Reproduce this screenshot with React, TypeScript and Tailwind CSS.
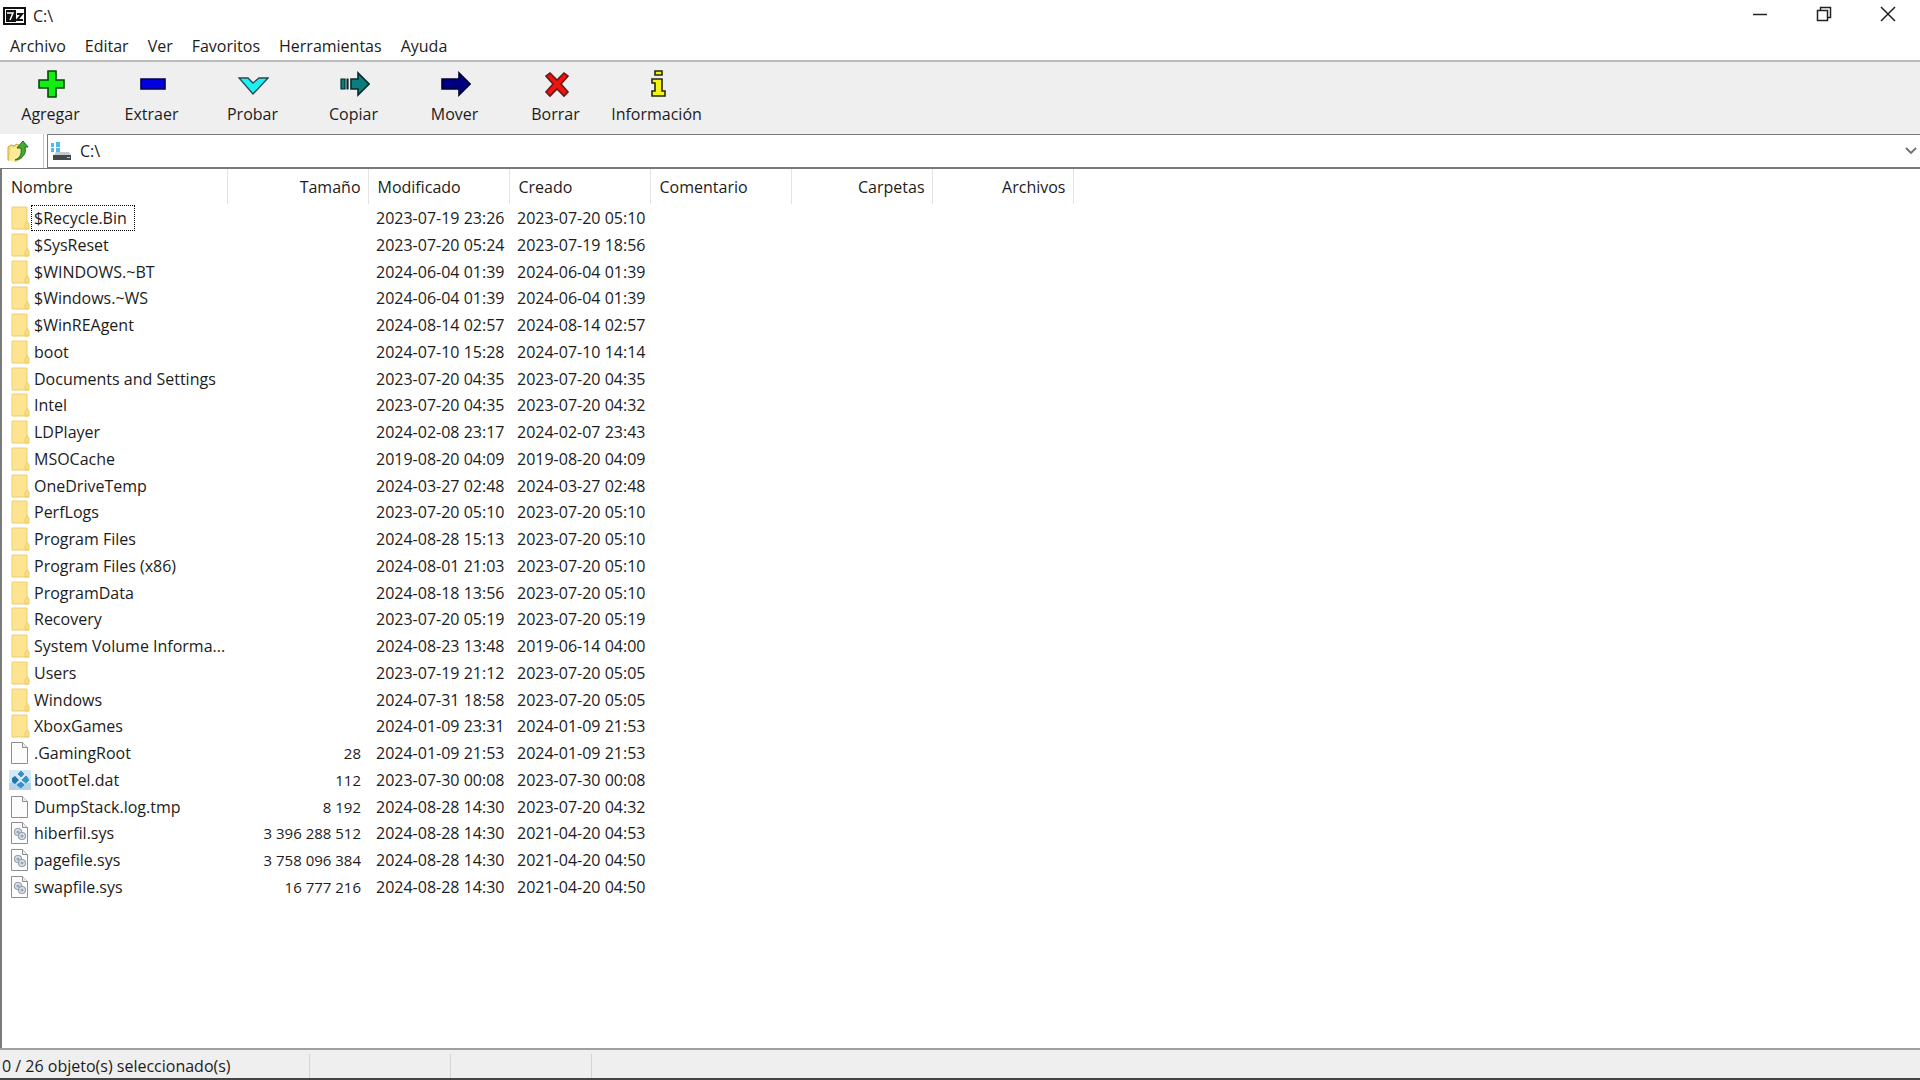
import type { ReactNode } from 'react';

type FileKind = 'folder' | 'blank' | 'kodi' | 'system';

type Entry = {
  name: string;
  size?: string;
  modified: string;
  created: string;
  kind: FileKind;
};

const menus = ['Archivo', 'Editar', 'Ver', 'Favoritos', 'Herramientas', 'Ayuda'];

const columns = [
  { label: 'Nombre' },
  { label: 'Tamaño', right: true },
  { label: 'Modificado' },
  { label: 'Creado' },
  { label: 'Comentario' },
  { label: 'Carpetas', right: true },
  { label: 'Archivos', right: true }
];

const entries: Entry[] = [
  { name: '$Recycle.Bin', modified: '2023-07-19 23:26', created: '2023-07-20 05:10', kind: 'folder' },
  { name: '$SysReset', modified: '2023-07-20 05:24', created: '2023-07-19 18:56', kind: 'folder' },
  { name: '$WINDOWS.~BT', modified: '2024-06-04 01:39', created: '2024-06-04 01:39', kind: 'folder' },
  { name: '$Windows.~WS', modified: '2024-06-04 01:39', created: '2024-06-04 01:39', kind: 'folder' },
  { name: '$WinREAgent', modified: '2024-08-14 02:57', created: '2024-08-14 02:57', kind: 'folder' },
  { name: 'boot', modified: '2024-07-10 15:28', created: '2024-07-10 14:14', kind: 'folder' },
  { name: 'Documents and Settings', modified: '2023-07-20 04:35', created: '2023-07-20 04:35', kind: 'folder' },
  { name: 'Intel', modified: '2023-07-20 04:35', created: '2023-07-20 04:32', kind: 'folder' },
  { name: 'LDPlayer', modified: '2024-02-08 23:17', created: '2024-02-07 23:43', kind: 'folder' },
  { name: 'MSOCache', modified: '2019-08-20 04:09', created: '2019-08-20 04:09', kind: 'folder' },
  { name: 'OneDriveTemp', modified: '2024-03-27 02:48', created: '2024-03-27 02:48', kind: 'folder' },
  { name: 'PerfLogs', modified: '2023-07-20 05:10', created: '2023-07-20 05:10', kind: 'folder' },
  { name: 'Program Files', modified: '2024-08-28 15:13', created: '2023-07-20 05:10', kind: 'folder' },
  { name: 'Program Files (x86)', modified: '2024-08-01 21:03', created: '2023-07-20 05:10', kind: 'folder' },
  { name: 'ProgramData', modified: '2024-08-18 13:56', created: '2023-07-20 05:10', kind: 'folder' },
  { name: 'Recovery', modified: '2023-07-20 05:19', created: '2023-07-20 05:19', kind: 'folder' },
  { name: 'System Volume Informa...', modified: '2024-08-23 13:48', created: '2019-06-14 04:00', kind: 'folder' },
  { name: 'Users', modified: '2023-07-19 21:12', created: '2023-07-20 05:05', kind: 'folder' },
  { name: 'Windows', modified: '2024-07-31 18:58', created: '2023-07-20 05:05', kind: 'folder' },
  { name: 'XboxGames', modified: '2024-01-09 23:31', created: '2024-01-09 21:53', kind: 'folder' },
  { name: '.GamingRoot', size: '28', modified: '2024-01-09 21:53', created: '2024-01-09 21:53', kind: 'blank' },
  { name: 'bootTel.dat', size: '112', modified: '2023-07-30 00:08', created: '2023-07-30 00:08', kind: 'kodi' },
  { name: 'DumpStack.log.tmp', size: '8 192', modified: '2024-08-28 14:30', created: '2023-07-20 04:32', kind: 'blank' },
  { name: 'hiberfil.sys', size: '3 396 288 512', modified: '2024-08-28 14:30', created: '2021-04-20 04:53', kind: 'system' },
  { name: 'pagefile.sys', size: '3 758 096 384', modified: '2024-08-28 14:30', created: '2021-04-20 04:50', kind: 'system' },
  { name: 'swapfile.sys', size: '16 777 216', modified: '2024-08-28 14:30', created: '2021-04-20 04:50', kind: 'system' }
];

function ToolIcon({ children }: { children: ReactNode }) {
  return (
    <svg viewBox="0 0 32 32" className="w-8 h-8" strokeWidth="1.6" aria-hidden="true">
      {children}
    </svg>
  );
}

const tools = [
  {
    label: 'Agregar',
    icon: (
      <ToolIcon>
        <path d="M13 3h8v9h8v8h-8v9h-8v-9H4v-8h9z" fill="#12ee12" stroke="#064a06" />
      </ToolIcon>
    )
  },
  {
    label: 'Extraer',
    icon: (
      <ToolIcon>
        <path d="M5 11h24v10H5z" fill="#0000e0" stroke="#00004e" />
      </ToolIcon>
    )
  },
  {
    label: 'Probar',
    icon: (
      <ToolIcon>
        <path d="M2 10h9l5 5 6-5h9L16 26z" fill="#1cf0f5" stroke="#27484c" strokeWidth="1.3" />
      </ToolIcon>
    )
  },
  {
    label: 'Copiar',
    icon: (
      <ToolIcon>
        <path d="M3 11h4v10H3zM9 11h1v10H9z" fill="#0b7d7d" stroke="#062b2b" strokeWidth="1.2" />
        <path d="M13 11h7V5l11 11-11 11v-6h-7z" fill="#0b7d7d" stroke="#062b2b" />
      </ToolIcon>
    )
  },
  {
    label: 'Mover',
    icon: (
      <ToolIcon>
        <path d="M3 11h17V5l11 11-11 11v-6H3z" fill="#00007e" stroke="#000036" />
      </ToolIcon>
    )
  },
  {
    label: 'Borrar',
    icon: (
      <ToolIcon>
        <path
          d="M10 5l7 7 7-7 4 3-7 8 7 8-4 4-7-7-7 7-4-4 7-8-7-8z"
          fill="#ee1410"
          stroke="#6d1512"
        />
      </ToolIcon>
    )
  },
  {
    label: 'Información',
    icon: (
      <ToolIcon>
        <path d="M14 3h7v4h-7zM11 11h10v12h3v5H11v-5h3v-8h-3z" fill="#f5f514" stroke="#29290a" />
      </ToolIcon>
    )
  }
];

function FileIcon({ kind }: { kind: FileKind }) {
  if (kind === 'folder') {
    return (
      <svg viewBox="0 0 22 24" className="w-[22px] h-6 shrink-0" aria-hidden="true">
        <path d="M3 1h15v22H3z" fill="#fce491" />
        <path d="M3 1v22M3 1h15" stroke="#f0cf74" fill="none" />
        <path d="M18 1v15l-2 3v4h4v-5l-2-3" fill="#fadd80" stroke="#edcd6c" />
        <path d="M3 23h17" stroke="#eccb6c" />
      </svg>
    );
  }
  if (kind === 'kodi') {
    return (
      <svg viewBox="0 0 22 24" className="w-[22px] h-6 shrink-0" aria-hidden="true">
        <path d="M0 2h22v20H0z" fill="#d3e8f4" />
        <path d="M0 15h22v7H0z" fill="#b5d3e6" />
        <g fill="#3592c9" stroke="#3592c9" strokeWidth="1" strokeLinejoin="round">
          <path d="M12 3l3 3-3 3-3-3z" />
          <path d="M17 8l3 4-3 3-4-3z" />
          <path d="M12 14l3 3-3 3-4-3z" />
        </g>
        <path d="M3 10l3-2 4 4-4 4-3-2z" fill="#1f75ad" />
      </svg>
    );
  }
  return (
    <svg viewBox="0 0 22 24" className="w-[22px] h-6 shrink-0" aria-hidden="true">
      <path d="M2.500 1.500h11l5 5v16h-16z" fill="#fcfcfc" stroke="#8e8e8e" />
      <path d="M13.500 1.500v5h5" fill="#eeeeee" stroke="#8e8e8e" />
      {kind === 'system' && (
        <g fill="#e1e7ec" stroke="#8f9eab" strokeWidth="1.200">
          <circle cx="9" cy="11" r="3.500" />
          <circle cx="13" cy="15" r="3.500" />
          <circle cx="9" cy="11" r="1" />
          <circle cx="13" cy="15" r="1" />
        </g>
      )}
    </svg>
  );
}

function TitleBar() {
  return (
    <header className="flex items-center justify-between h-8 pl-[3px]">
      <div className="flex items-center gap-[7px]">
        <svg viewBox="0 0 23 18" className="w-[23px] h-[18px]" aria-hidden="true">
          <path d="M1 1h21v16H1z" fill="#fff" stroke="#111" strokeWidth="2" />
          <path d="M3 3h10v12H3z" fill="#111" />
          <path d="M4 6h6l-3 7" fill="none" stroke="#fff" strokeWidth="1.500" />
          <path d="M14 7h5l-5 6h6" fill="none" stroke="#111" strokeWidth="2" />
        </svg>
        <h1>C:\</h1>
      </div>
      <div className="flex h-full">
        <button aria-label="Minimizar" className="flex items-center justify-center w-16 pb-1 hover:bg-gray-200">
          <svg viewBox="0 0 16 16" className="size-4" aria-hidden="true">
            <path d="M1 8.500h14" stroke="#222" strokeWidth="1.500" />
          </svg>
        </button>
        <button aria-label="Restaurar" className="flex items-center justify-center w-16 pb-1 hover:bg-gray-200">
          <svg viewBox="0 0 16 16" className="size-4" fill="none" stroke="#222" strokeWidth="1.500" aria-hidden="true">
            <path d="M1.500 4.500h10v10h-10zM4.500 4.500v-3h10v10h-3" />
          </svg>
        </button>
        <button aria-label="Cerrar" className="flex items-center justify-center w-16 pb-1 hover:bg-red-500">
          <svg viewBox="0 0 16 16" className="size-4" aria-hidden="true">
            <path d="M1 1l14 14M15 1L1 15" stroke="#222" strokeWidth="1.500" />
          </svg>
        </button>
      </div>
    </header>
  );
}

function AddressBar() {
  return (
    <div className="flex h-[34px] bg-white">
      <button aria-label="Subir un nivel" className="flex items-center w-11 pl-[7px] border-r border-[#c4c4c4] hover:bg-sky-50">
        <svg viewBox="0 0 22 24" className="w-[22px] h-6" aria-hidden="true">
          <path d="M1 8l3-2 4 1 1-2 6 2v12l-6 3-8-1z" fill="#f3dc72" stroke="#c9a93c" />
          <path d="M4 9l10-2v12l-6 3H2z" fill="#fbeb9a" />
          <path d="M8 21c5-2 7-6 6-12h-4l6-7 5 6h-3c2 7-3 12-10 13z" fill="#3fae35" stroke="#1f6d1c" />
        </svg>
      </button>
      <div className="flex flex-1 items-center ml-[3px] pl-[2px] border-l border-y border-[#7a7a7a] relative">
        <svg viewBox="0 0 22 20" className="w-[22px] h-5" aria-hidden="true">
          <path d="M1 2h3v4H1zM6 1h4v5H6zM1 7h3v4H1zM6 7h4v4H6z" fill="#4bbcea" />
          <path d="M6 11h13l2 3H4z" fill="#c4c9cc" />
          <path d="M3 14h18v5H3z" fill="#42484c" />
          <path d="M17 16h3v1h-3z" fill="#9fd6a0" />
        </svg>
        <select aria-label="Ruta" defaultValue="C:\" className="flex-1 h-full pl-2 appearance-none bg-transparent outline-none">
          <option>C:\</option>
        </select>
        <svg viewBox="0 0 14 8" className="absolute right-[2px] w-[14px] h-2 pointer-events-none" aria-hidden="true">
          <path d="M2 1l5 5 5-5" fill="none" stroke="#707070" strokeWidth="1.800" />
        </svg>
      </div>
    </div>
  );
}

function FileList() {
  return (
    <main className="flex-1 border-l-2 border-t border-[#7a7a7a] bg-white">
      <table className="table-fixed border-collapse w-[1071px]">
        <colgroup>
          <col className="w-[225px]" />
          <col span={6} className="w-[141px]" />
        </colgroup>
        <thead>
          <tr className="h-[35px]">
            {columns.map((column) => (
              <th
                key={column.label}
                scope="col"
                className={`border-r border-[#e4e4e4] p-0 font-normal ${column.right ? 'pr-[7px] text-right' : 'pl-[9px] text-left'}`}
              >
                {column.label}
              </th>
            ))}
          </tr>
        </thead>
        <tbody>
          {entries.map((entry, i) => (
            <tr key={entry.name} className="h-[27px] nth-[4n]:h-[26px]">
              <td className="p-0 pl-[7px]">
                <div className="flex items-center h-[26px]">
                  <FileIcon kind={entry.kind} />
                  <span
                    className={
                      i === 0
                        ? 'h-[26px] border border-dotted border-black pl-[2px] pr-[7px] whitespace-nowrap'
                        : 'h-[26px] border border-transparent pl-[2px] whitespace-nowrap'
                    }
                  >
                    {entry.name}
                  </span>
                </div>
              </td>
              <td className="p-0 pr-[7px] text-right text-[15px] whitespace-nowrap">{entry.size}</td>
              <td className="p-0 pl-2 whitespace-nowrap">{entry.modified}</td>
              <td className="p-0 pl-2 whitespace-nowrap">{entry.created}</td>
              <td colSpan={3} />
            </tr>
          ))}
        </tbody>
      </table>
    </main>
  );
}

export default function App() {
  return (
    <div className="flex flex-col min-h-screen bg-white font-['Open_Sans','Noto_Sans',sans-serif] text-base leading-6 text-[#1c1c1c]">
      <TitleBar />

      {/* Menu */}
      <nav className="flex h-7 px-[10px] gap-[19px]">
        {menus.map((menu) => (
          <button key={menu} className="hover:bg-sky-100">{menu}</button>
        ))}
      </nav>

      {/* Toolbar */}
      <div className="flex h-[74px] border-t-2 border-[#bcbcbc] bg-[#efefef]">
        {tools.map((tool) => (
          <button key={tool.label} className="flex flex-col items-center w-[101px] pt-[6px] gap-[2px] hover:bg-sky-100">
            {tool.icon}
            <span>{tool.label}</span>
          </button>
        ))}
      </div>

      <AddressBar />
      <FileList />

      {/* Status bar */}
      <footer className="flex items-end h-8 border-t-2 border-b-2 border-t-[#a0a0a0] border-b-[#444444] bg-[#efefef]">
        <div className="w-[310px] pl-[2px] border-r border-[#d4d4d4]">0 / 26 objeto(s) seleccionado(s)</div>
        <div className="w-[141px] h-6 border-r border-[#d4d4d4]" />
        <div className="w-[141px] h-6 border-r border-[#d4d4d4]" />
      </footer>
    </div>
  );
}
